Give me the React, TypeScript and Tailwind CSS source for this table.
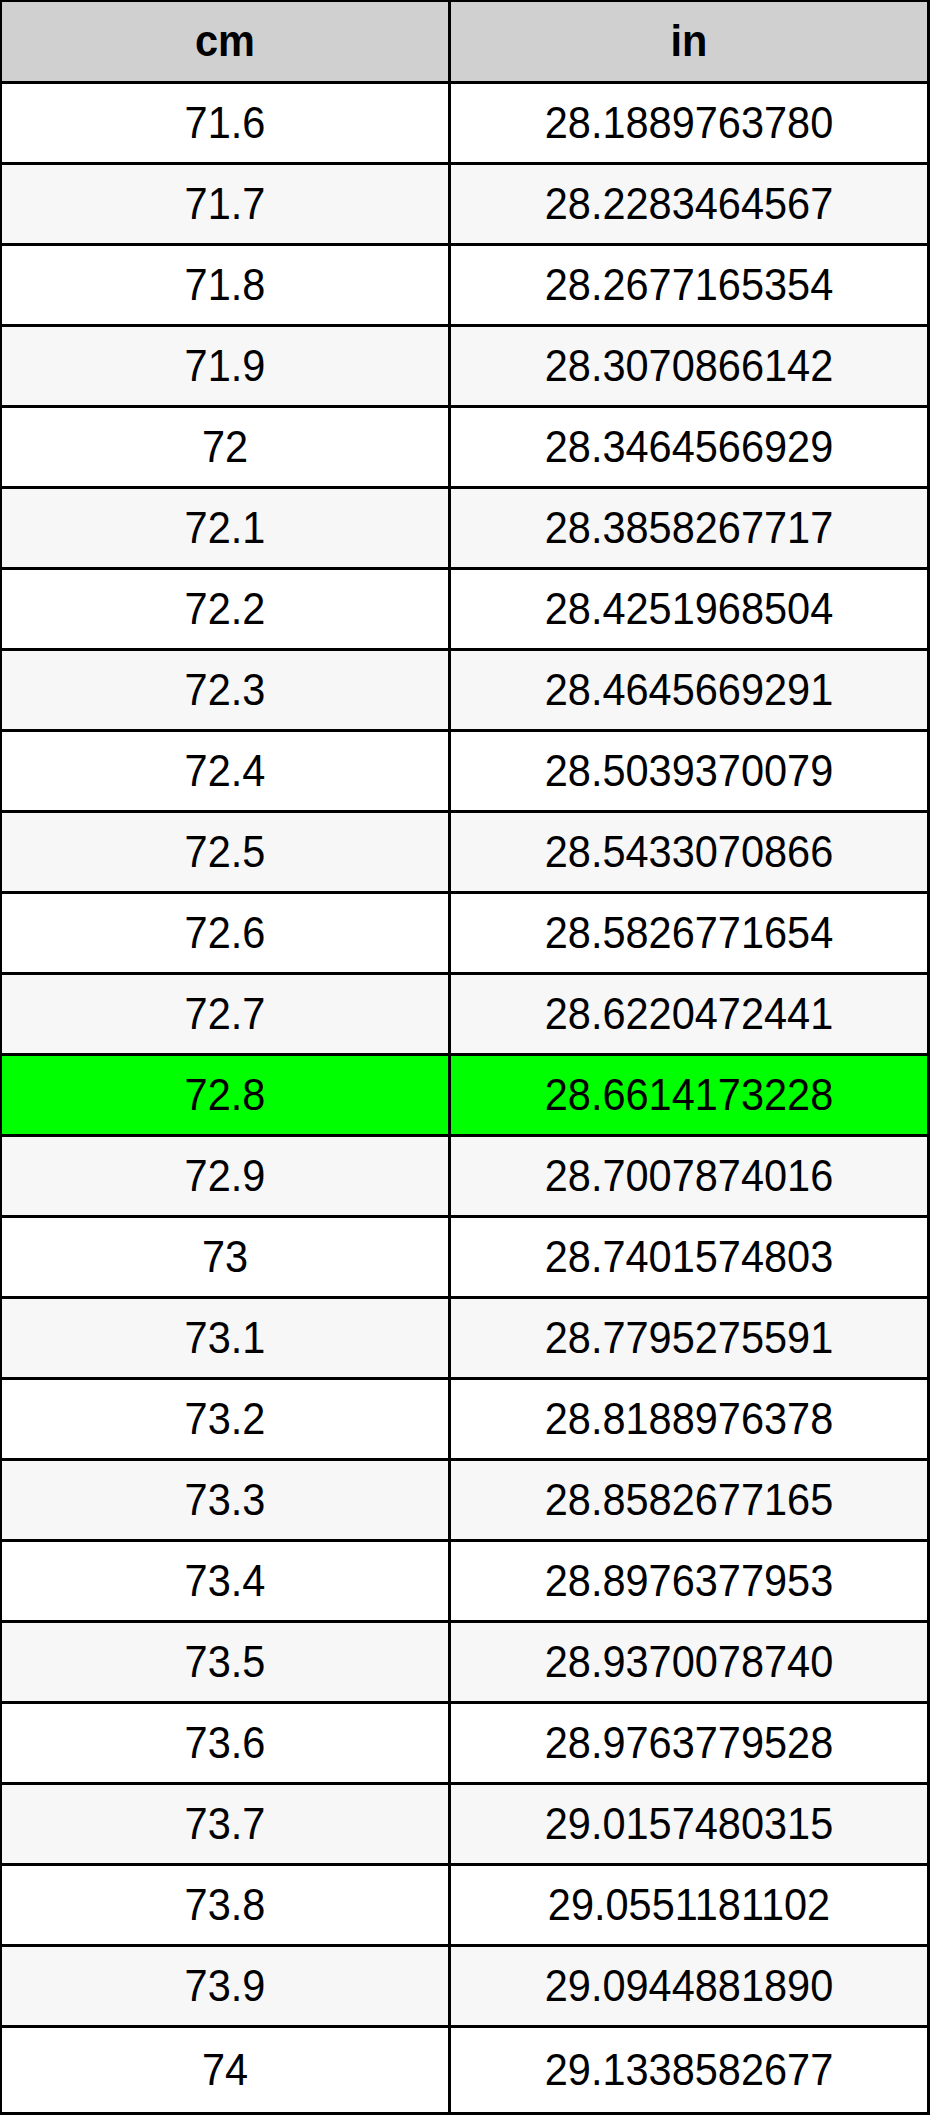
const rows: [string, string][] = [
  ["71.6", "28.1889763780"],
  ["71.7", "28.2283464567"],
  ["71.8", "28.2677165354"],
  ["71.9", "28.3070866142"],
  ["72", "28.3464566929"],
  ["72.1", "28.3858267717"],
  ["72.2", "28.4251968504"],
  ["72.3", "28.4645669291"],
  ["72.4", "28.5039370079"],
  ["72.5", "28.5433070866"],
  ["72.6", "28.5826771654"],
  ["72.7", "28.6220472441"],
  ["72.8", "28.6614173228"],
  ["72.9", "28.7007874016"],
  ["73", "28.7401574803"],
  ["73.1", "28.7795275591"],
  ["73.2", "28.8188976378"],
  ["73.3", "28.8582677165"],
  ["73.4", "28.8976377953"],
  ["73.5", "28.9370078740"],
  ["73.6", "28.9763779528"],
  ["73.7", "29.0157480315"],
  ["73.8", "29.0551181102"],
  ["73.9", "29.0944881890"],
  ["74", "29.1338582677"],
];

export default function App() {
  return (
    <div
      className="w-[930px] bg-white text-black"
      style={{ fontFamily: '"Liberation Sans", Arial, sans-serif' }}
    >
      <div className="border-t-2 border-l-2 border-r-[3px] border-b-[3px] border-black">
        {/* Header */}
        <div className="flex h-[82px] border-b-[3px] border-black bg-[#d0d0d0] font-bold">
          <div className="w-[449px] border-r-[3px] border-black flex items-center justify-center">
            <span className="text-[41.5px] scale-y-[1.07]">cm</span>
          </div>
          <div className="flex-1 flex items-center justify-center">
            <span className="text-[41.5px] scale-y-[1.07]">in</span>
          </div>
        </div>

        {rows.map(([cm, inch], i) => {
          const last = i === rows.length - 1;
          const bg = cm === "72.8" ? "bg-[#00ff00]" : i % 2 === 1 ? "bg-[#f7f7f7]" : "bg-white";
          return (
            <div
              key={cm}
              className={
                "flex " +
                bg +
                (last ? " h-[84px]" : " h-[81px] border-b-[3px] border-black")
              }
            >
              <div className="w-[449px] border-r-[3px] border-black flex items-center justify-center">
                <span className="text-[41.5px] scale-y-[1.07]">{cm}</span>
              </div>
              <div className="flex-1 flex items-center justify-center">
                <span className="text-[41.5px] scale-y-[1.07]">{inch}</span>
              </div>
            </div>
          );
        })}
      </div>
    </div>
  );
}
